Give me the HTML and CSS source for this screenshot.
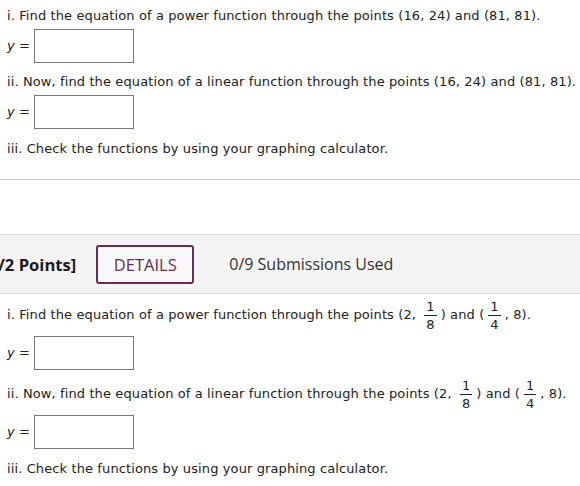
FILE: index.html
```html
<!DOCTYPE html>
<html>
<head>
<meta charset="utf-8">
<link rel="stylesheet" href="styles.css">
</head>
<body>
<div class="part part-top">
  <p class="line">i. Find the equation of a power function through the points (16, 24) and (81, 81).</p>
  <div class="answer"><span class="yeq"><i>y</i> =</span><span class="box"></span></div>
  <p class="line">ii. Now, find the equation of a linear function through the points (16, 24) and (81, 81).</p>
  <div class="answer"><span class="yeq"><i>y</i> =</span><span class="box"></span></div>
  <p class="line last">iii. Check the functions by using your graphing calculator.</p>
</div>
<hr class="rule">
<div class="header">
  <span class="points">/2 Points]</span>
  <span class="details">DETAILS</span>
  <span class="subs">0/9 Submissions Used</span>
</div>
<div class="part part-bottom">
  <p class="line frac-line">i. Find the equation of a power function through the points (2, <span class="frac"><span class="num">1</span><span class="den">8</span></span>) and (<span class="frac"><span class="num">1</span><span class="den">4</span></span>, 8).</p>
  <div class="answer"><span class="yeq"><i>y</i> =</span><span class="box"></span></div>
  <p class="line frac-line">ii. Now, find the equation of a linear function through the points (2, <span class="frac"><span class="num">1</span><span class="den">8</span></span>) and (<span class="frac"><span class="num">1</span><span class="den">4</span></span>, 8).</p>
  <div class="answer"><span class="yeq"><i>y</i> =</span><span class="box"></span></div>
  <p class="line last">iii. Check the functions by using your graphing calculator.</p>
</div>
</body>
</html>
```
FILE: styles.css
```css
html, body {
  margin: 0;
  padding: 0;
  background: #ffffff;
}
body {
  font-family: "DejaVu Sans", Verdana, sans-serif;
  font-size: 13px;
  letter-spacing: 0.11px;
  color: #222222;
  width: 580px;
  overflow: hidden;
}
.part {
  padding: 0 7px;
}
.part-top {
  padding-top: 7px;
}
.line {
  margin: 10px 0 0;
  line-height: 18px;
  white-space: nowrap;
}
.part-top .line:first-child {
  margin-top: 0;
}
.part-top .line.last {
  margin-top: 11px;
}
.answer {
  display: flex;
  align-items: center;
  margin-top: 4px;
  height: 34px;
}
.yeq {
  width: 27px;
  line-height: 18px;
}
.yeq i {
  font-style: italic;
}
.box {
  display: block;
  width: 98px;
  height: 32px;
  border: 1px solid #7a7a7a;
  background: #fff;
}
.rule {
  margin: 21px 0 0;
  border: 0;
  border-top: 1px solid #c8c8c8;
  height: 0;
}
.header {
  margin-top: 54px;
  height: 58px;
  background: #f4f4f4;
  border-top: 1px solid #dcdcdc;
  border-bottom: 1px solid #dcdcdc;
  display: flex;
  align-items: center;
  font-family: "Open Sans", "Noto Sans", sans-serif;
  letter-spacing: 0;
}
.points {
  font-weight: bold;
  font-size: 16.6px;
  color: #1a1a1a;
  margin-left: -2px;
}
.details {
  margin-left: 20px;
  width: 94px;
  height: 35px;
  box-sizing: content-box;
  border: 2px solid #6c2c4d;
  border-radius: 3px;
  color: #6c2c4d;
  font-size: 16.5px;
  display: flex;
  align-items: center;
  justify-content: center;
  background: #f8f8f8;
}
.subs {
  margin-left: 35px;
  font-size: 16px;
  color: #333;
}
.part-bottom {
  padding-top: 5px;
}
.frac-line {
  line-height: 32px;
  margin-top: 0;
}
.answer + .frac-line {
  margin-top: 8px;
}
.part-bottom .answer {
  margin-top: 5px;
}
.part-bottom .line.last {
  margin-top: 11px;
}
.frac {
  display: inline-flex;
  flex-direction: column;
  align-items: center;
  vertical-align: middle;
  margin: 0 4px 0 4px;
  line-height: 12px;
}
.num {
  padding: 0 2px 2px;
  border-bottom: 1px solid #222;
}
.den {
  padding: 3px 2px 0;
}
```
